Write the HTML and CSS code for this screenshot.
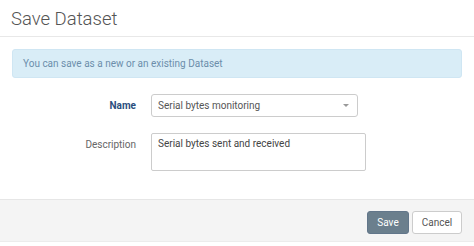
FILE: index.html
```html
<!DOCTYPE html>
<html lang="en">
<head>
    <meta charset="UTF-8">
    <title>Save Dataset</title>
    <link rel="stylesheet" href="styles.css">
</head>
<body>
    <div class="modal">
        <div class="modal-header">
            <h4 class="modal-title">Save Dataset</h4>
        </div>
        <div class="modal-body">
            <div class="alert-info">You can save as a new or an existing Dataset</div>
            <div class="form-row">
                <label class="form-label required">Name</label>
                <div class="select-box">
                    <span>Serial bytes monitoring</span>
                    <span class="caret"></span>
                </div>
            </div>
            <div class="form-row">
                <label class="form-label">Description</label>
                <textarea class="text-box">Serial bytes sent and received</textarea>
            </div>
        </div>
        <div class="modal-footer">
            <button class="btn btn-primary">Save</button>
            <button class="btn btn-default">Cancel</button>
        </div>
    </div>
</body>
</html>
```
FILE: styles.css
```css
body {
    margin: 0;
    background-color: #fff;
    font-family: Roboto, "Liberation Sans", sans-serif;
    font-size: 10px;
    color: #555;
}
.modal {
    width: 474px;
}
.modal-header {
    height: 36px;
    border-bottom: 1px solid #e8e8e8;
    padding-left: 11px;
}
.modal-title {
    margin: 0;
    padding-top: 3px;
    font-size: 18.5px;
    font-weight: 300;
    line-height: 33px;
    color: #555;
}
.modal-body {
    padding: 12px 12px 28px 12px;
}
.alert-info {
    height: 27px;
    line-height: 27px;
    padding-left: 10px;
    background-color: #d9edf7;
    border: 1px solid #cfe6f3;
    border-radius: 3px;
    color: #6c8eab;
}
.form-row {
    display: flex;
    align-items: flex-start;
    margin-top: 16px;
}
.form-label {
    width: 124px;
    text-align: right;
    padding-right: 15px;
    line-height: 23px;
    color: #666;
}
.form-label.required {
    font-weight: bold;
    color: #2b4e7e;
}
.select-box {
    width: 193px;
    height: 21px;
    display: flex;
    align-items: center;
    justify-content: space-between;
    padding: 0 6px;
    border: 1px solid #ccc;
    border-radius: 3px;
    color: #555;
}
.caret {
    width: 0;
    height: 0;
    border-left: 3px solid transparent;
    border-right: 3px solid transparent;
    border-top: 3px solid #999;
    margin-right: 2px;
}
.text-box {
    width: 201px;
    height: 28px;
    margin: 0;
    padding: 4px 6px;
    border: 1px solid #ccc;
    border-radius: 2px;
    font-family: Roboto, "Liberation Sans", sans-serif;
    font-size: 10px;
    color: #444;
    resize: none;
    display: block;
}
.modal-footer {
    height: 41px;
    border-top: 1px solid #e6e6e6;
    border-bottom: 1px solid #ececec;
    background-color: #f4f4f4;
    display: flex;
    justify-content: flex-end;
    align-items: flex-start;
    gap: 3px;
    padding-right: 12px;
}
.btn {
    margin-top: 11px;
    height: 23px;
    padding: 0 6px;
    border-radius: 3px;
    font-family: Roboto, "Liberation Sans", sans-serif;
    font-size: 10px;
    cursor: pointer;
}
.btn-primary {
    width: 42px;
    background-color: #6b7f8d;
    border: 1px solid #62768a;
    color: #fff;
}
.btn-default {
    width: 50px;
    background-color: #fff;
    border: 1px solid #ccc;
    color: #555;
}
```
